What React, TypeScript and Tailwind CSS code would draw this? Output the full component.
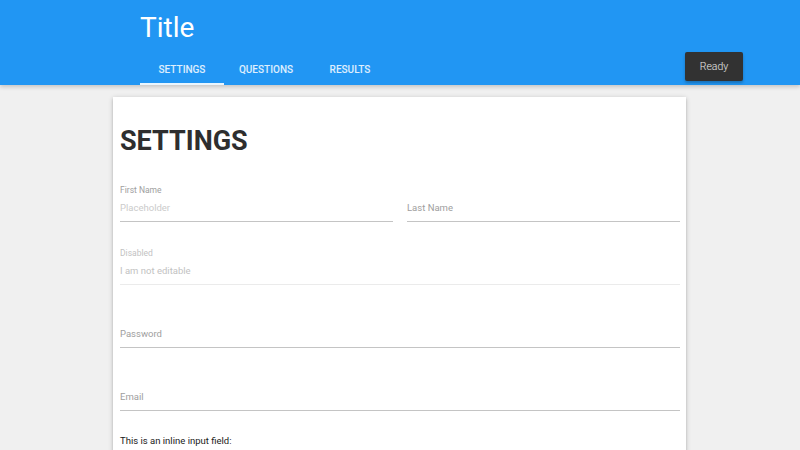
import React from 'react';

const tabs = ['SETTINGS', 'QUESTIONS', 'RESULTS'];

function Field({
  label,
  placeholder,
  value,
  disabled,
}: {
  label?: string;
  placeholder?: string;
  value?: string;
  disabled?: boolean;
}) {
  return (
    <div className="flex flex-col">
      <label className={`h-[12px] text-[8.5px] leading-[12px] ${disabled ? 'text-[#c2c2c2]' : 'text-[#9e9e9e]'}`}>
        {label}
      </label>
      <input
        disabled={disabled}
        defaultValue={value}
        placeholder={placeholder}
        className={`mt-[4px] h-[16px] w-full bg-transparent text-[9.5px] leading-[16px] outline-none ${
          disabled ? 'text-[#c2c2c2]' : 'text-[#212121]'
        } placeholder:text-[#cbcbcb]`}
      />
      <div className={`mt-[5px] h-px ${disabled ? 'bg-[#ebebeb]' : 'bg-[#c4c4c4]'}`} />
    </div>
  );
}

function PlainField({ text }: { text: string }) {
  return (
    <div className="flex flex-col">
      <div className="h-[12px]" />
      <input
        placeholder={text}
        className="mt-[4px] h-[16px] w-full bg-transparent text-[9.5px] leading-[16px] text-[#212121] outline-none placeholder:text-[#9e9e9e]"
      />
      <div className="mt-[5px] h-px bg-[#c4c4c4]" />
    </div>
  );
}

export default function App() {
  return (
    <div className="min-h-[450px] overflow-hidden bg-[#f0f0f0] font-['Roboto',sans-serif]">
      {/* 헤더 */}
      <header className="relative z-10 flex h-[85px] bg-[#2196f3] pl-[140px] pr-[57px] shadow-[0_2px_4px_rgba(0,0,0,0.18)]">
        <div className="flex flex-col">
          <div className="flex h-[56px] items-center text-[28px] leading-none text-white">Title</div>
          <nav className="flex h-[29px]">
            {tabs.map((t, i) => (
              <div
                key={t}
                className={`flex w-[84px] items-center justify-center text-[10px] font-medium text-white/85 ${
                  i === 0 ? 'border-b-2 border-white/90' : 'border-b-2 border-transparent'
                }`}
              >
                {t}
              </div>
            ))}
          </nav>
        </div>
        <button className="mb-[4px] ml-auto h-[29px] w-[58px] self-end rounded-[2px] bg-[#323232] text-[10.5px] font-light text-white/90 shadow-[0_2px_3px_rgba(0,0,0,0.25)]">
          Ready
        </button>
      </header>

      {/* 카드 */}
      <main className="ml-[113px] mt-[12px] w-[573px] bg-white pl-[7px] pr-[6px] pt-[27px] pb-[30px] shadow-[0_2px_2px_0_rgba(0,0,0,0.14),0_3px_1px_-2px_rgba(0,0,0,0.12),0_1px_5px_0_rgba(0,0,0,0.2)]">
        <h1 className="h-[34px] text-[27px] font-bold leading-[34px] text-[#2e2e2e]">SETTINGS</h1>

        <div className="mt-[26px] grid grid-cols-2 gap-x-[14px]">
          <Field label="First Name" placeholder="Placeholder" />
          <PlainField text="Last Name" />
        </div>

        <div className="mt-[25px]">
          <Field label="Disabled" value="I am not editable" disabled />
        </div>

        <div className="mt-[25px]">
          <PlainField text="Password" />
        </div>

        <div className="mt-[25px]">
          <PlainField text="Email" />
        </div>

        <p className="mt-[23px] text-[9.5px] leading-[14px] text-[#212121]">This is an inline input field:</p>
      </main>
    </div>
  );
}
